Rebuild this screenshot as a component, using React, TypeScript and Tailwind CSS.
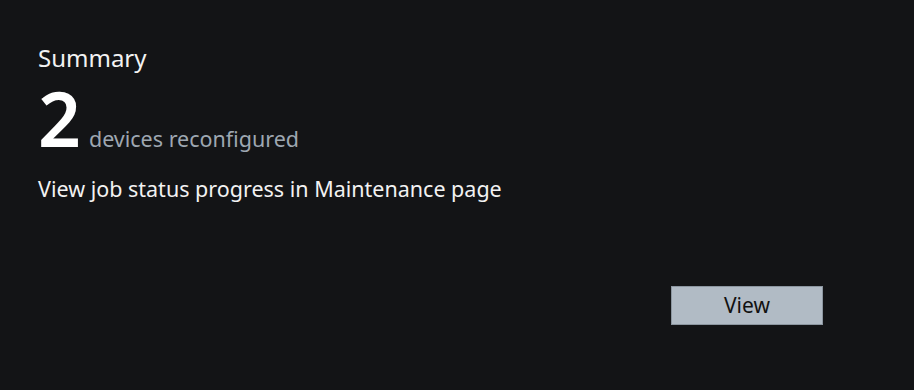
export default function App() {
  return (
    <div className="w-[914px] h-[390px] bg-[#131416] text-white" style={{ fontFamily: '"Noto Sans", sans-serif' }}>
      <div className="flex flex-col pl-[38px] pt-[42px] pr-[91px] h-full">
        <div className="text-[24px] leading-[32px] text-[#f2f2f2]">Summary</div>
        <div className="flex items-baseline gap-[8px] mt-[14px] h-[62px]">
          <span className="text-[75px] leading-[60px] font-semibold">2</span>
          <span className="text-[21.5px] leading-[24px] text-[#9ea7b1]">devices reconfigured</span>
        </div>
        <div className="text-[21.5px] leading-[30px] mt-[24px] text-[#f2f2f2]">View job status progress in Maintenance page</div>
        <div className="flex justify-end mt-[82px]">
          <button className="w-[152px] h-[39px] bg-[#b1bbc5] border border-[#8c96a0] text-[#111] text-[21px] leading-[37px]">View</button>
        </div>
      </div>
    </div>
  );
}
